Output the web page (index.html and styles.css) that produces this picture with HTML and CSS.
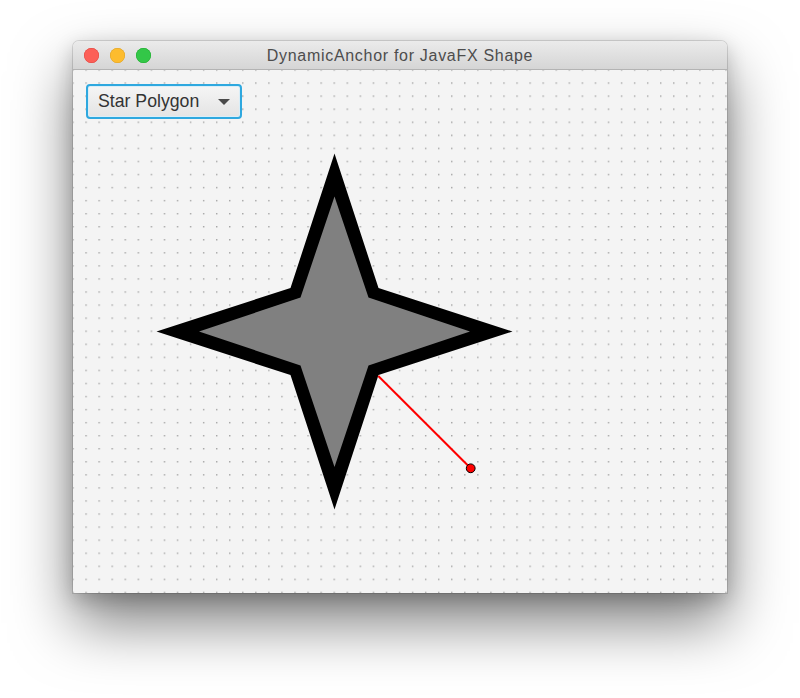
FILE: index.html
```html
<!DOCTYPE html>
<html>
<head>
<meta charset="utf-8">
<link rel="stylesheet" href="styles.css">
</head>
<body>
<div class="window">
  <div class="titlebar">
    <div class="lights">
      <span class="light red"></span>
      <span class="light yellow"></span>
      <span class="light green"></span>
    </div>
    <div class="title">DynamicAnchor for JavaFX Shape</div>
  </div>
  <div class="content">
    <svg class="canvas" width="654" height="523" viewBox="0 0 654 523">
      <defs>
        <pattern id="dots" patternUnits="userSpaceOnUse" x="-0.7" y="-0.7" width="13.06" height="13.06">
          <rect x="0" y="0" width="1.4" height="1.4" fill="#a3a3a3"/>
        </pattern>
      </defs>
      <rect x="0" y="0" width="654" height="523" fill="url(#dots)"/>
      <polygon points="261.5,83.5 305.5,218 439.5,261.5 305.5,305 261.5,439.5 217.5,305 83.5,261.5 217.5,218" fill="#000"/>
      <polygon points="261.5,126.5 295.5,227.5 397,261.5 295.5,295.5 261.5,397 227.5,295.5 126,261.5 227.5,227.5" fill="#808080"/>
      <line x1="305.3" y1="306" x2="397.7" y2="398.3" stroke="#ff0000" stroke-width="2"/>
      <circle cx="397.7" cy="398.3" r="4.4" fill="#ff0000" stroke="#000" stroke-width="1"/>
    </svg>
    <div class="combo">
      <span class="combo-label">Star Polygon</span>
      <span class="combo-arrow"></span>
    </div>
  </div>
</div>
</body>
</html>
```

FILE: styles.css
```css
html, body {
  margin: 0;
  padding: 0;
  background: #ffffff;
}

body {
  width: 800px;
  height: 698px;
  overflow: hidden;
  font-family: "Liberation Sans", Arial, sans-serif;
}

.window {
  margin: 41px 0 0 73px;
  width: 654px;
  height: 552px;
  border-radius: 6px 6px 0 0;
  box-shadow: 0 30px 60px rgba(0, 0, 0, 0.5), 0 6px 20px rgba(0, 0, 0, 0.2), 0 0 0 1px rgba(0, 0, 0, 0.12);
  background: #f4f4f4;
  display: flex;
  flex-direction: column;
}

.titlebar {
  height: 28px;
  flex: none;
  border-radius: 6px 6px 0 0;
  background: linear-gradient(#ebebeb, #d5d5d5);
  border-bottom: 1px solid #b3b3b3;
  display: flex;
  align-items: center;
  position: relative;
}

.lights {
  display: flex;
  gap: 11px;
  padding-left: 11px;
}

.light {
  width: 15px;
  height: 15px;
  border-radius: 50%;
  display: block;
}

.red { background: #fc5f57; box-shadow: inset 0 0 0 0.5px #e0443e; }
.yellow { background: #fdbc2e; box-shadow: inset 0 0 0 0.5px #dea123; }
.green { background: #33c748; box-shadow: inset 0 0 0 0.5px #1aab29; }

.title {
  position: absolute;
  left: 0;
  right: 0;
  top: 0;
  bottom: 0;
  display: flex;
  align-items: center;
  justify-content: center;
  font-size: 16px;
  letter-spacing: 0.7px;
  color: #4d4d4d;
  padding-top: 1px;
}

.content {
  position: relative;
  flex: 1;
  background: #f4f4f4;
}

.canvas {
  display: block;
}

.combo {
  position: absolute;
  left: 13px;
  top: 14px;
  width: 156px;
  height: 35px;
  box-sizing: border-box;
  border: 2px solid #2ea8df;
  border-radius: 4px;
  background: linear-gradient(#f5f5f5, #e4e4e4);
  box-shadow: inset 0 0 0 1px #d9eef8;
  display: flex;
  align-items: center;
  padding-left: 10px;
  padding-right: 10px;
}

.combo-label {
  font-size: 17.7px;
  color: #333333;
  flex: 1;
}

.combo-arrow {
  width: 0;
  height: 0;
  border-left: 6px solid transparent;
  border-right: 6px solid transparent;
  border-top: 6px solid #4a4a4a;
  margin-top: 1px;
}
```
